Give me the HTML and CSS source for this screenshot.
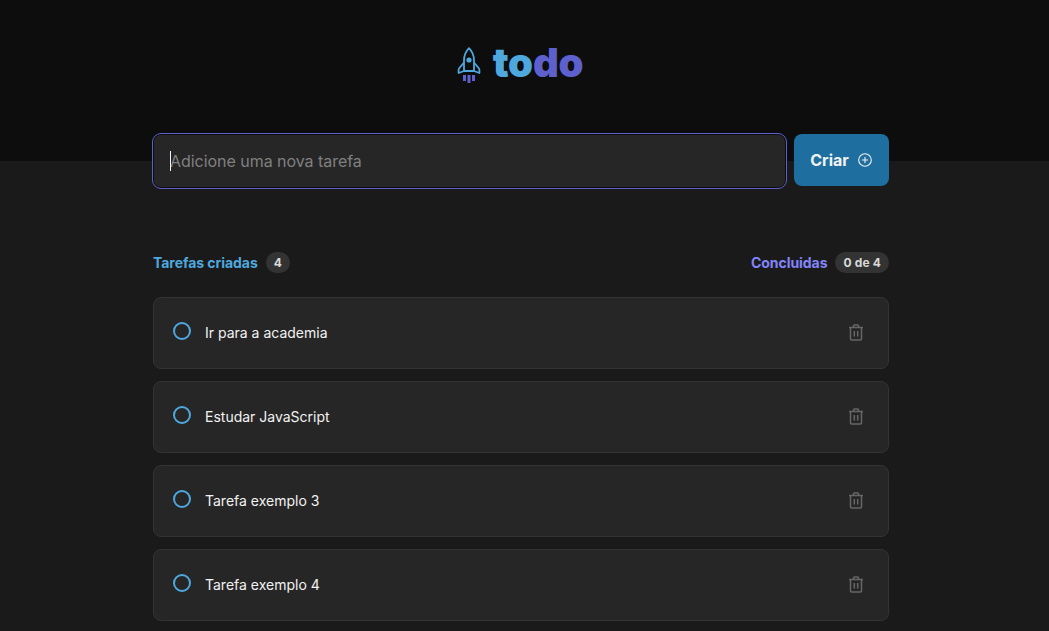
FILE: index.html
```html
<!DOCTYPE html>
<html lang="en">
<head>
    <meta charset="UTF-8">
    <meta name="viewport" content="width=device-width, initial-scale=1.0">
    <title>todo</title>
    <link rel="stylesheet" href="styles.css">
</head>
<body>
    <header class="header">
        <div class="logo">
            <svg class="logo-icon" width="24" height="36" viewBox="0 0 24 36" fill="none">
                <path d="M12 1.2C8.6 4.6 7 9 7 13.5V24H17V13.5C17 9 15.4 4.6 12 1.2Z" stroke="#4EA8DE" stroke-width="1.8" stroke-linejoin="round"/>
                <path d="M7 15.5L2 21.5C1.5 22.2 1.4 24 1.6 26L7 24M17 15.5L22 21.5C22.5 22.2 22.6 24 22.4 26L17 24" stroke="#4EA8DE" stroke-width="1.8" stroke-linejoin="round"/>
                <circle cx="12" cy="13" r="2.6" fill="#4EA8DE"/>
                <path d="M7.5 28V34M12 28V36M16.5 28V34" stroke="#5E60CE" stroke-width="3"/>
            </svg>
            <span class="logo-text"><span class="logo-to">to</span><span class="logo-do">do</span></span>
        </div>
    </header>

    <main class="container">
        <form class="new-task" onsubmit="event.preventDefault();">
            <div class="input-wrap">
                <input class="new-task-input" type="text" placeholder="Adicione uma nova tarefa" autofocus>
                <span class="caret"></span>
            </div>
            <button class="btn" type="submit">
                Criar
                <svg width="16" height="16" viewBox="0 0 16 16" fill="none">
                    <circle cx="8" cy="8" r="6.3" stroke="#F2F2F2" stroke-width="1.1"/>
                    <path d="M8 5V11M5 8H11" stroke="#F2F2F2" stroke-width="1.1"/>
                </svg>
            </button>
        </form>

        <div class="info">
            <div class="info-item">
                <strong class="info-created">Tarefas criadas</strong>
                <span class="counter">4</span>
            </div>
            <div class="info-item">
                <strong class="info-done">Concluidas</strong>
                <span class="counter">0 de 4</span>
            </div>
        </div>

        <ul class="tasks">
            <li class="task">
                <span class="check"></span>
                <p class="task-text">Ir para a academia</p>
                <svg class="trash" width="24" height="24" viewBox="0 0 24 24" fill="none">
                    <path d="M6.5 7V18C6.5 18.6 6.9 19 7.5 19H16.5C17.1 19 17.5 18.6 17.5 18V7M5 6.5H19M9.5 6.5V5C9.5 4.4 9.9 4 10.5 4H13.5C14.1 4 14.5 4.4 14.5 5V6.5M10.3 10V15.5M13.7 10V15.5" stroke="#666666" stroke-width="1.5"/>
                </svg>
            </li>
            <li class="task">
                <span class="check"></span>
                <p class="task-text">Estudar JavaScript</p>
                <svg class="trash" width="24" height="24" viewBox="0 0 24 24" fill="none">
                    <path d="M6.5 7V18C6.5 18.6 6.9 19 7.5 19H16.5C17.1 19 17.5 18.6 17.5 18V7M5 6.5H19M9.5 6.5V5C9.5 4.4 9.9 4 10.5 4H13.5C14.1 4 14.5 4.4 14.5 5V6.5M10.3 10V15.5M13.7 10V15.5" stroke="#666666" stroke-width="1.5"/>
                </svg>
            </li>
            <li class="task">
                <span class="check"></span>
                <p class="task-text">Tarefa exemplo 3</p>
                <svg class="trash" width="24" height="24" viewBox="0 0 24 24" fill="none">
                    <path d="M6.5 7V18C6.5 18.6 6.9 19 7.5 19H16.5C17.1 19 17.5 18.6 17.5 18V7M5 6.5H19M9.5 6.5V5C9.5 4.4 9.9 4 10.5 4H13.5C14.1 4 14.5 4.4 14.5 5V6.5M10.3 10V15.5M13.7 10V15.5" stroke="#666666" stroke-width="1.5"/>
                </svg>
            </li>
            <li class="task">
                <span class="check"></span>
                <p class="task-text">Tarefa exemplo 4</p>
                <svg class="trash" width="24" height="24" viewBox="0 0 24 24" fill="none">
                    <path d="M6.5 7V18C6.5 18.6 6.9 19 7.5 19H16.5C17.1 19 17.5 18.6 17.5 18V7M5 6.5H19M9.5 6.5V5C9.5 4.4 9.9 4 10.5 4H13.5C14.1 4 14.5 4.4 14.5 5V6.5M10.3 10V15.5M13.7 10V15.5" stroke="#666666" stroke-width="1.5"/>
                </svg>
            </li>
        </ul>
    </main>
</body>
</html>
```

FILE: styles.css
```css
* {
    margin: 0;
    padding: 0;
    box-sizing: border-box;
}

html, body {
    height: 100%;
    overflow: hidden;
}

body {
    background-color: #1a1a1a;
    color: #f2f2f2;
    font-family: Inter, sans-serif;
    font-size: 14px;
}

/* page content sits left of centre, same as the width with a scrollbar */
.header {
    height: 161px;
    background-color: #0d0d0d;
    display: flex;
    justify-content: center;
    padding: 45px 9px 0 0;
}

.logo {
    display: flex;
    align-items: flex-start;
    gap: 12px;
    height: 40px;
}

.logo-icon {
    margin-top: 2px;
}

.logo-text {
    font-size: 40px;
    font-weight: 900;
    line-height: 35px;
    letter-spacing: -0.25px;
}

.logo-to {
    color: #4ea8de;
}

.logo-do {
    color: #5e60ce;
}

.container {
    width: 736px;
    margin: -27px 0 0 153px;
}

.new-task {
    display: flex;
    align-items: flex-start;
    gap: 8px;
}

.input-wrap {
    flex: 1;
    position: relative;
}

.new-task-input {
    display: block;
    width: 100%;
    height: 54px;
    padding: 0 16px;
    background-color: #262626;
    color: #f2f2f2;
    border: 1px solid #0d0d0d;
    border-radius: 8px;
    outline: 1px solid #5e60ce;
    font-family: inherit;
    font-size: 16px;
    letter-spacing: -0.04px;
    caret-color: transparent;
}

.new-task-input::placeholder {
    color: #808080;
}

.caret {
    position: absolute;
    left: 17px;
    top: 17px;
    width: 1px;
    height: 20px;
    background-color: #f2f2f2;
}

.btn {
    width: 95px;
    height: 52px;
    display: flex;
    align-items: center;
    justify-content: center;
    gap: 8px;
    background-color: #1e6f9f;
    color: #f2f2f2;
    border: none;
    border-radius: 8px;
    font-family: inherit;
    font-size: 16px;
    font-weight: 700;
    cursor: pointer;
}

.info {
    display: flex;
    justify-content: space-between;
    align-items: center;
    margin-top: 64px;
}

.info-item {
    display: flex;
    align-items: center;
    gap: 8px;
}

.info-item strong {
    font-size: 14px;
    font-weight: 700;
    letter-spacing: -0.05px;
}

.info-created {
    color: #4ea8de;
}

.info-done {
    color: #8284fa;
}

.counter {
    background-color: #333333;
    color: #d9d9d9;
    font-size: 12px;
    font-weight: 700;
    line-height: 15px;
    letter-spacing: 0.15px;
    padding: 3px 8px;
    border-radius: 999px;
}

.tasks {
    list-style: none;
    display: flex;
    flex-direction: column;
    gap: 12px;
    margin-top: 24px;
}

.task {
    height: 72px;
    display: flex;
    align-items: center;
    gap: 14px;
    padding: 0 20px 0 19px;
    background-color: #262626;
    border: 1px solid #333333;
    border-radius: 8px;
}

.check {
    width: 18px;
    height: 18px;
    margin-top: -4px;
    border: 2px solid #4ea8de;
    border-radius: 50%;
    flex-shrink: 0;
}

.task-text {
    flex: 1;
    font-size: 14px;
    line-height: 20px;
}

.trash {
    flex-shrink: 0;
}
```
